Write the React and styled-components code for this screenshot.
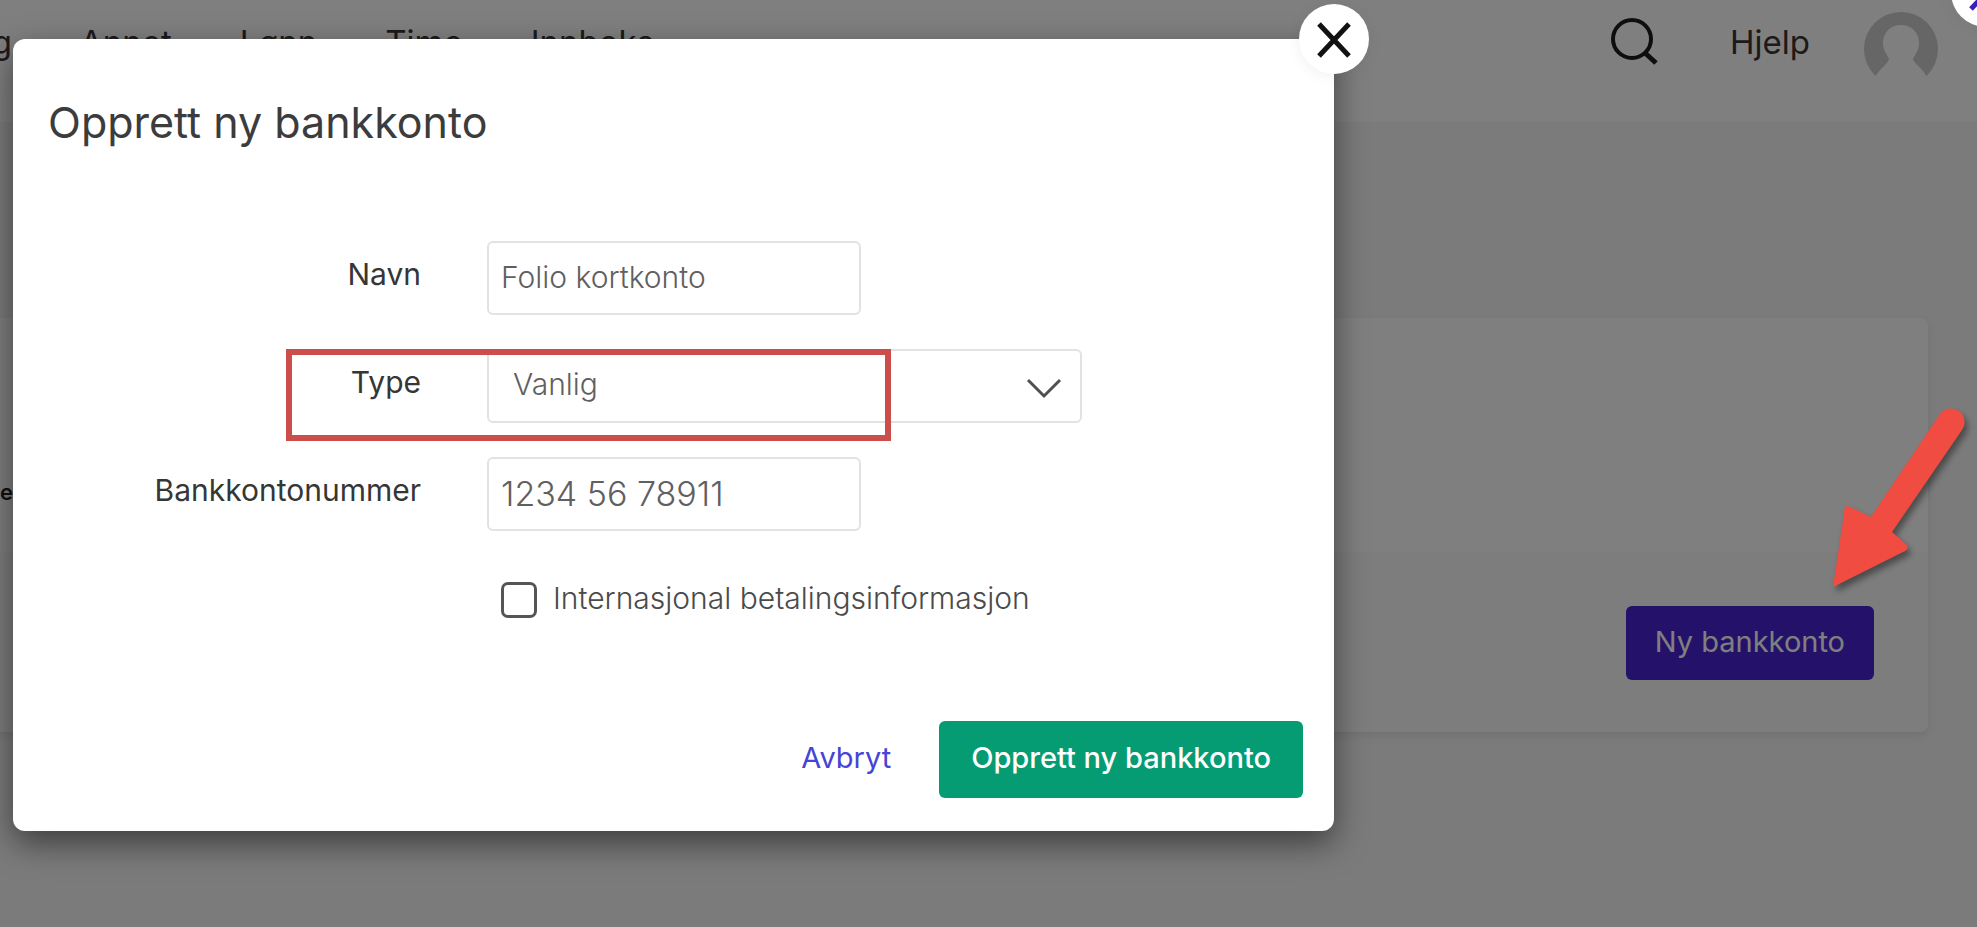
import React from "react";
import styled, { createGlobalStyle } from "styled-components";

const GlobalStyle = createGlobalStyle`
  * {
    box-sizing: border-box;
  }
  body {
    margin: 0;
    background: #f6f6f6;
    font-family: Inter, "Liberation Sans", sans-serif;
  }
  button, input, select {
    font-family: inherit;
  }
`;

const Screen = styled.div`
  position: relative;
  min-height: 100vh;
  overflow: hidden;
`;

/* the page is scrolled a little to the side behind the dialog */
const Page = styled.div`
  margin-left: -56px;
`;

const Header = styled.header`
  display: flex;
  justify-content: space-between;
  align-items: center;
  padding: 0 38px 38px 0;
  background: #ffffff;
`;

const Nav = styled.nav`
  display: flex;
  gap: 68px;
`;

const Tools = styled.div`
  display: flex;
  align-items: center;
`;

const NavLink = styled.a`
  color: #3a3436;
  font-size: 33px;
  line-height: 40px;
  text-decoration: none;
`;

const IconButton = styled.button`
  display: flex;
  margin-right: 72px;
  padding: 0;
  border: 0;
  background: none;
`;

const Avatar = styled.svg`
  display: block;
  margin-left: 53px;
`;

const Card = styled.section`
  margin: 196px 49px 0 0;
  border-radius: 8px;
  background: #ffffff;
  box-shadow: 0 4px 8px rgba(0, 0, 0, 0.08);
`;

const CardBody = styled.div`
  height: 234px;
  padding: 154px 56px 0;
  color: #222222;
  font-size: 22px;
  font-weight: 600;
  line-height: 40px;
`;

const CardFooter = styled.div`
  display: flex;
  justify-content: flex-end;
  padding: 54px;
  padding-bottom: 52px;
  border-radius: 0 0 8px 8px;
  background: #fafafa;
`;

const Button = styled.button`
  height: ${(p) => (p.$large ? 77 : 74)}px;
  padding: 0 ${(p) => (p.$large ? 32 : 29)}px 4px;
  border: 0;
  border-radius: 6px;
  background: ${(p) => p.$color};
  color: #ffffff;
  font-size: 29px;
  font-weight: ${(p) => (p.$large ? 500 : 400)};
`;

const Backdrop = styled.div`
  position: absolute;
  inset: 0;
  padding: 39px 13px;
  background: rgba(0, 0, 0, 0.5);
`;

const Dialog = styled.section`
  position: relative;
  width: 100%;
  max-width: 1321px;
  padding: 57px 31px 33px 35px;
  border-radius: 12px;
  background: #ffffff;
  box-shadow: 0 12px 32px rgba(0, 0, 0, 0.5);
`;

const RoundButton = styled.button`
  position: absolute;
  top: ${(p) => p.$top}px;
  right: ${(p) => p.$right}px;
  display: flex;
  align-items: center;
  justify-content: center;
  width: 70px;
  height: 70px;
  padding: 0;
  border: 0;
  border-radius: 50%;
  background: #ffffff;
  color: ${(p) => p.$color};
  box-shadow: 0 2px 16px rgba(0, 0, 0, 0.06);
`;

const Title = styled.h1`
  margin: 0 0 93px;
  color: #3c3c3c;
  font-size: 43px;
  font-weight: 400;
  line-height: 52px;
`;

const Form = styled.form`
  display: flex;
  flex-direction: column;
  gap: 34px;
`;

const Row = styled.div`
  position: relative;
  display: grid;
  grid-template-columns: 373px 1fr;
  column-gap: 66px;
  align-items: center;
  height: 74px;
`;

const Label = styled.label`
  padding-bottom: 8px;
  color: #363636;
  font-size: 30px;
  text-align: right;
`;

const TextInput = styled.input`
  width: 374px;
  height: 74px;
  padding: 0 12px 2px;
  border: 2px solid #e2e2e2;
  border-radius: 6px;
  background: #ffffff;
  color: #606060;
  font-size: ${(p) => (p.$digits ? 34 : 30)}px;
  font-weight: 300;
`;

const SelectBox = styled.div`
  display: grid;
  width: 595px;
  align-items: center;

  select,
  svg {
    grid-area: 1 / 1;
  }
  svg {
    justify-self: end;
    margin-top: 4px;
    margin-right: 20px;
    pointer-events: none;
  }
`;

const Select = styled.select`
  width: 100%;
  height: 74px;
  padding: 0 24px 4px;
  appearance: none;
  border: 2px solid #e2e2e2;
  border-radius: 6px;
  background: #ffffff;
  color: #606060;
  font-size: 30px;
  font-weight: 300;
`;

const Highlight = styled.span`
  position: absolute;
  top: 0;
  left: 238px;
  width: 605px;
  height: 92px;
  border: 6px solid #cc4e4a;
  pointer-events: none;
`;

const CheckRow = styled.div`
  display: flex;
  align-items: center;
  gap: 16px;
  height: 74px;
  padding: 0 0 4px 453px;
`;

const Checkbox = styled.input`
  width: 36px;
  height: 36px;
  margin: 0;
  appearance: none;
  border: 3px solid #555555;
  border-radius: 7px;
  background: #ffffff;
`;

const CheckLabel = styled.label`
  padding-bottom: 4px;
  color: #4a4a4a;
  font-size: 30px;
  font-weight: 300;
`;

const Actions = styled.div`
  display: flex;
  justify-content: flex-end;
  align-items: center;
  gap: 48px;
  margin-top: 48px;
`;

const Cancel = styled.a`
  padding-bottom: 4px;
  color: #4643d6;
  font-size: 29px;
  text-decoration: none;
`;

const Arrow = styled.svg`
  position: absolute;
  top: 395px;
  right: 0;
  filter: drop-shadow(3px 5px 3px rgba(0, 0, 0, 0.4));
`;

const Cross = () => (
  <svg width="40" height="40" viewBox="0 0 40 40" fill="none" stroke="currentColor" strokeWidth="5">
    <path d="M5 5L35 37M35 5L5 37" />
  </svg>
);

const App = () => {
  return (
    <Screen>
      <GlobalStyle />
      <Page>
        <Header>
          <Nav>
            <NavLink href="#salg">Salg</NavLink>
            <NavLink href="#annet">Annet</NavLink>
            <NavLink href="#lonn">Lønn</NavLink>
            <NavLink href="#time">Time</NavLink>
            <NavLink href="#innboks">Innboks</NavLink>
          </Nav>
          <Tools>
            <IconButton aria-label="Søk">
              <svg width="48" height="48" viewBox="0 0 48 48" fill="none" stroke="#1c1c1c" strokeWidth="4">
                <circle cx="22" cy="21" r="19" />
                <path d="M34 34L46 45" strokeWidth="5" />
              </svg>
            </IconButton>
            <NavLink href="#hjelp">Hjelp</NavLink>
            <Avatar width="76" height="84" viewBox="0 0 76 84">
              <circle cx="38" cy="49" r="37" fill="#cccccc" />
              <path
                d="M38 25C27 25 20 33 20 43C20 51 24 54 26 59C25 64 18 67 12 77L6 84H70L64 77C59 67 51 64 50 59C52 54 56 51 56 43C56 33 49 25 38 25Z"
                fill="#ffffff"
              />
            </Avatar>
          </Tools>
        </Header>
        <Card>
          <CardBody>er</CardBody>
          <CardFooter>
            <Button $color="#4824d4">Ny bankkonto</Button>
          </CardFooter>
        </Card>
      </Page>

      <Backdrop>
        <Dialog role="dialog" aria-labelledby="dialog-title">
          <Title id="dialog-title">Opprett ny bankkonto</Title>
          <Form>
            <Row>
              <Label htmlFor="navn">Navn</Label>
              <TextInput id="navn" defaultValue="Folio kortkonto" />
            </Row>
            <Row>
              <Label htmlFor="type">Type</Label>
              <SelectBox>
                <Select id="type" defaultValue="vanlig">
                  <option value="vanlig">Vanlig</option>
                </Select>
                <svg width="36" height="22" viewBox="0 0 36 22" fill="none" stroke="#505050" strokeWidth="3">
                  <path d="M2 3L18 19L34 3" />
                </svg>
              </SelectBox>
              <Highlight />
            </Row>
            <Row>
              <Label htmlFor="nummer">Bankkontonummer</Label>
              <TextInput id="nummer" $digits defaultValue="1234 56 78911" />
            </Row>
            <CheckRow>
              <Checkbox id="internasjonal" type="checkbox" />
              <CheckLabel htmlFor="internasjonal">Internasjonal betalingsinformasjon</CheckLabel>
            </CheckRow>
            <Actions>
              <Cancel href="#avbryt">Avbryt</Cancel>
              <Button type="button" $large $color="#059c74">Opprett ny bankkonto</Button>
            </Actions>
          </Form>
          <RoundButton $top={-35} $right={-35} $color="#111111" aria-label="Lukk">
            <Cross />
          </RoundButton>
        </Dialog>
      </Backdrop>

      <RoundButton $top={-43} $right={-44} $color="#3a1fb8" aria-label="Lukk veiledning">
        <Cross />
      </RoundButton>
      <Arrow width="157" height="210" viewBox="0 0 157 210">
        <path
          d="M13 192L25 112Q26 110 30 112L51 122L120 19A13 13 0 0 1 142 35L72 137L86 149Q90 153 85 156Z"
          fill="#f04c42"
        />
      </Arrow>
    </Screen>
  );
};

export default App;
